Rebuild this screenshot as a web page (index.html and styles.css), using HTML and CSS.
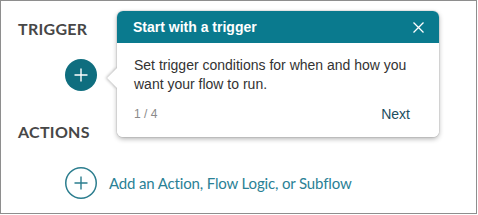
FILE: index.html
```html
<!DOCTYPE html>
<html lang="en">
<head>
<meta charset="utf-8">
<title>Flow designer</title>
<link rel="stylesheet" href="styles.css">
</head>
<body>
<div class="frame">
  <section class="section section-trigger">
    <h2 class="section-title">TRIGGER</h2>
    <div class="add-row">
      <button class="add-btn add-btn-filled" aria-label="Add a trigger">
        <svg viewBox="0 0 32 32" width="32" height="32"><path d="M16 9.5v13M9.5 16h13" stroke="#fff" stroke-width="1.4" fill="none"/></svg>
      </button>
    </div>
  </section>
  <section class="section section-actions">
    <h2 class="section-title">ACTIONS</h2>
    <div class="add-row">
      <button class="add-btn add-btn-outline" aria-label="Add an action">
        <svg viewBox="0 0 32 32" width="32" height="32"><circle cx="16" cy="16" r="15.25" stroke="#2b7d8e" stroke-width="1.5" fill="none"/><path d="M16 9.5v13M9.5 16h13" stroke="#2b7d8e" stroke-width="1.4" fill="none"/></svg>
      </button>
      <a class="add-link" href="#">Add an Action, Flow Logic, or Subflow</a>
    </div>
  </section>

  <div class="popover" role="dialog">
    <div class="pop-arrow"></div>
    <div class="pop-header">
      <span class="pop-title">Start with a trigger</span>
      <button class="pop-close" aria-label="Close">
        <svg viewBox="0 0 11 11" width="11" height="11"><path d="M0.5 0.5l10 10M10.5 0.5l-10 10" stroke="#fff" stroke-width="1.3" fill="none"/></svg>
      </button>
    </div>
    <div class="pop-main">
      <p class="pop-text">Set trigger conditions for when and how you want your flow to run.</p>
      <div class="pop-footer">
        <span class="pop-step">1 / 4</span>
        <button class="pop-next">Next</button>
      </div>
    </div>
  </div>
</div>
</body>
</html>
```
FILE: styles.css
```css
html, body {
  margin: 0;
  padding: 0;
  background: #fff;
}
.frame {
  position: relative;
  box-sizing: border-box;
  width: 477px;
  height: 214px;
  border: 1px solid #8e8e8e;
  padding: 18px 0 0 17px;
  font-family: Lato, "Liberation Sans", sans-serif;
}
.section-title {
  margin: 0;
  font-family: Lato, sans-serif;
  font-weight: 700;
  font-size: 16px;
  line-height: 20px;
  color: #474747;
  letter-spacing: 0.3px;
}
.add-row {
  display: flex;
  align-items: center;
  gap: 12px;
  padding-left: 47px;
}
.section-trigger .add-row {
  margin-top: 20px;
}
.section-actions {
  margin-top: 31px;
}
.section-actions .add-row {
  margin-top: 25px;
}
.add-btn {
  width: 32px;
  height: 32px;
  padding: 0;
  border: 0;
  border-radius: 50%;
  background: transparent;
  display: block;
}
.add-btn svg {
  display: block;
}
.add-btn-filled {
  background: #0f6e7f;
}
.add-link {
  font-family: Lato, sans-serif;
  font-size: 15px;
  letter-spacing: -0.15px;
  color: #2a8196;
  text-decoration: none;
  line-height: 20px;
}

/* Popover */
.popover {
  position: absolute;
  left: 116px;
  top: 10px;
  width: 322px;
  height: 126px;
  border-radius: 6px;
  box-shadow: 0 2px 5px rgba(0, 0, 0, 0.3), 0 0 0 1px rgba(0, 0, 0, 0.06);
  font-family: "Liberation Sans", Arial, sans-serif;
  display: flex;
  flex-direction: column;
}
.pop-arrow {
  position: absolute;
  left: -7px;
  top: 60px;
  width: 14px;
  height: 14px;
  background: #fff;
  transform: rotate(45deg);
  box-shadow: -1px 1px 3px rgba(0, 0, 0, 0.25);
  z-index: 0;
}
.pop-header {
  position: relative;
  z-index: 1;
  height: 32px;
  background: #0a7a8e;
  border-radius: 6px 6px 0 0;
  display: flex;
  align-items: center;
  justify-content: space-between;
  padding: 0 15px 0 16px;
}
.pop-title {
  color: #fff;
  font-weight: 700;
  font-size: 14px;
  line-height: 18px;
}
.pop-close {
  padding: 0;
  border: 0;
  background: transparent;
  width: 11px;
  height: 11px;
  margin-top: 1px;
}
.pop-close svg {
  display: block;
}
.pop-main {
  position: relative;
  z-index: 1;
  flex: 1;
  background: #fff;
  border-radius: 0 0 6px 6px;
  padding: 13px 16px 0 17px;
}
.pop-text {
  margin: 0;
  font-size: 14px;
  line-height: 19px;
  color: #333;
}
.pop-footer {
  margin-top: 10px;
  display: flex;
  align-items: center;
  justify-content: space-between;
  height: 19px;
}
.pop-step {
  font-size: 12px;
  color: #8a8a8a;
}
.pop-next {
  padding: 0;
  border: 0;
  background: transparent;
  font-family: "Liberation Sans", Arial, sans-serif;
  font-size: 14px;
  color: #1d4e5f;
  margin-right: 13px;
}
```
